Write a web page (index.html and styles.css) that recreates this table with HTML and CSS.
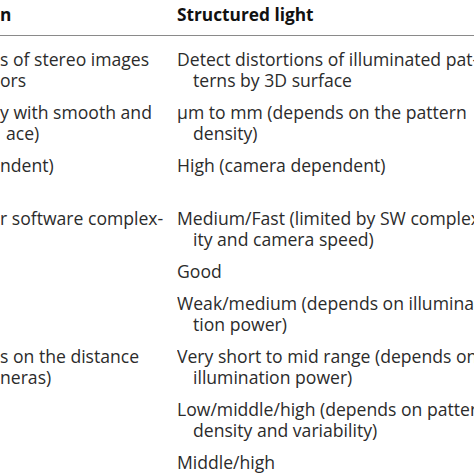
FILE: index.html
```html
<!DOCTYPE html>
<html>
<head>
<meta charset="utf-8">
<link rel="stylesheet" href="styles.css">
</head>
<body>
<div class="table">
  <div class="head">
    <div class="cell left"><span class="frag">n</span></div>
    <div class="cell right">Structured light</div>
  </div>
  <div class="body">
    <div class="row">
      <div class="cell left"><span class="ln">s of stereo images</span><span class="ln">ors</span></div>
      <div class="cell right"><span class="ln">Detect distortions of illuminated pat-</span><span class="ln cont">terns by 3D surface</span></div>
    </div>
    <div class="row">
      <div class="cell left"><span class="ln">y with smooth and</span><span class="ln sub">ace)</span></div>
      <div class="cell right"><span class="ln">µm to mm (depends on the pattern</span><span class="ln cont">density)</span></div>
    </div>
    <div class="row two">
      <div class="cell left"><span class="ln">ndent)</span></div>
      <div class="cell right"><span class="ln">High (camera dependent)</span></div>
    </div>
    <div class="row">
      <div class="cell left"><span class="ln">r software complex-</span></div>
      <div class="cell right"><span class="ln">Medium/Fast (limited by SW complex-</span><span class="ln cont">ity and camera speed)</span></div>
    </div>
    <div class="row">
      <div class="cell left"></div>
      <div class="cell right"><span class="ln">Good</span></div>
    </div>
    <div class="row">
      <div class="cell left"></div>
      <div class="cell right"><span class="ln">Weak/medium (depends on illumina-</span><span class="ln cont">tion power)</span></div>
    </div>
    <div class="row">
      <div class="cell left"><span class="ln">s on the distance</span><span class="ln">neras)</span></div>
      <div class="cell right"><span class="ln">Very short to mid range (depends on the</span><span class="ln cont">illumination power)</span></div>
    </div>
    <div class="row">
      <div class="cell left"></div>
      <div class="cell right"><span class="ln">Low/middle/high (depends on pattern</span><span class="ln cont">density and variability)</span></div>
    </div>
    <div class="row">
      <div class="cell left"></div>
      <div class="cell right"><span class="ln">Middle/high</span></div>
    </div>
  </div>
</div>
</body>
</html>
```
FILE: styles.css
```css
html, body {
  margin: 0;
  padding: 0;
  background: #ffffff;
}
body {
  width: 474px;
  height: 474px;
  overflow: hidden;
  font-family: "Open Sans", "Noto Sans", sans-serif;
  font-size: 17.6px;
  line-height: 21px;
  color: #2b2b2b;
}
.table {
  width: 474px;
}
.head {
  display: grid;
  grid-template-columns: 177px 1fr;
  padding: 4px 0 10px;
  border-bottom: 1px solid #8a8a8a;
  font-weight: 700;
  color: #111111;
  font-size: 17.3px;
}
.body {
  padding-top: 7px;
}
.row {
  display: grid;
  grid-template-columns: 177px 1fr;
  padding: 6px 0 5px;
}
.row.two {
  min-height: 42px;
}
.cell {
  overflow: hidden;
  white-space: nowrap;
}
.ln {
  display: block;
}
.cont {
  padding-left: 16px;
}
.sub {
  padding-left: 6px;
}
```
